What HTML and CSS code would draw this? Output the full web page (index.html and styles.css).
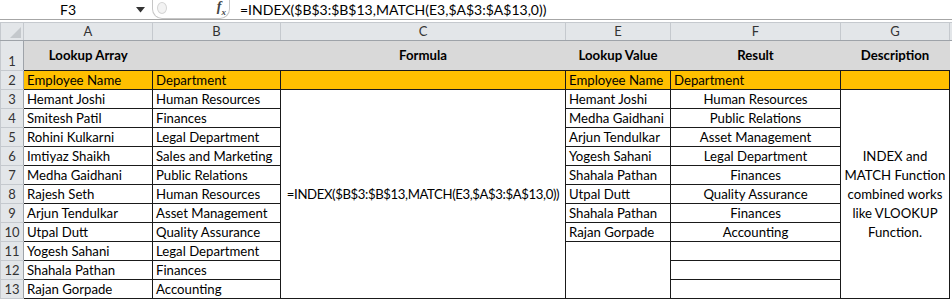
FILE: index.html
```html
<!DOCTYPE html>
<html lang="en">

<head>
    <meta charset="UTF-8">
    <meta name="viewport" content="width=device-width, initial-scale=1.0">
    <title>INDEX MATCH</title>
    <link rel="stylesheet" href="styles.css">
</head>

<body>
    <!-- 公式栏 -->
    <div class="formula-bar">
        <div class="name-box">F3</div>
        <div class="name-arrow">
            <svg width="9" height="6" viewBox="0 0 9 6"><path d="M0 0 H9 L4.5 5.5 Z" fill="#333" /></svg>
        </div>
        <div class="fx-group">
            <span class="grip"></span>
            <span class="fx">f<sub>x</sub></span>
        </div>
        <div class="formula-input">=INDEX($B$3:$B$13,MATCH(E3,$A$3:$A$13,0))</div>
    </div>

    <table class="sheet">
        <colgroup>
            <col class="c-rn">
            <col class="c-a">
            <col class="c-b">
            <col class="c-c">
            <col class="c-e">
            <col class="c-f">
            <col class="c-g">
            <col class="c-rest">
        </colgroup>
        <tr class="col-head">
            <th class="corner"><span class="tri"></span></th>
            <th>A</th>
            <th>B</th>
            <th>C</th>
            <th>E</th>
            <th>F</th>
            <th>G</th>
            <th class="rest"></th>
        </tr>
        <tr class="r1">
            <td class="rn">1</td>
            <td class="title">Lookup Array</td>
            <td class="title"></td>
            <td class="title">Formula</td>
            <td class="title">Lookup Value</td>
            <td class="title">Result</td>
            <td class="title">Description</td>
            <td class="rest"></td>
        </tr>
        <tr class="r2">
            <td class="rn">2</td>
            <td class="b hd">Employee Name</td>
            <td class="b hd">Department</td>
            <td class="b hd"></td>
            <td class="b hd">Employee Name</td>
            <td class="b hd">Department</td>
            <td class="b hd"></td>
            <td class="rest"></td>
        </tr>
        <tr>
            <td class="rn">3</td>
            <td class="b">Hemant Joshi</td>
            <td class="b">Human Resources</td>
            <td class="b formula" rowspan="11">=INDEX($B$3:$B$13,MATCH(E3,$A$3:$A$13,0))</td>
            <td class="b">Hemant Joshi</td>
            <td class="b mid">Human Resources</td>
            <td class="b desc" rowspan="11">INDEX and<br>MATCH Function<br>combined works<br>like VLOOKUP<br>Function.</td>
            <td class="rest"></td>
        </tr>
        <tr>
            <td class="rn">4</td>
            <td class="b">Smitesh Patil</td>
            <td class="b">Finances</td>
            <td class="b">Medha Gaidhani</td>
            <td class="b mid">Public Relations</td>
            <td class="rest"></td>
        </tr>
        <tr>
            <td class="rn">5</td>
            <td class="b">Rohini Kulkarni</td>
            <td class="b">Legal Department</td>
            <td class="b">Arjun Tendulkar</td>
            <td class="b mid">Asset Management</td>
            <td class="rest"></td>
        </tr>
        <tr>
            <td class="rn">6</td>
            <td class="b">Imtiyaz Shaikh</td>
            <td class="b">Sales and Marketing</td>
            <td class="b">Yogesh Sahani</td>
            <td class="b mid">Legal Department</td>
            <td class="rest"></td>
        </tr>
        <tr>
            <td class="rn">7</td>
            <td class="b">Medha Gaidhani</td>
            <td class="b">Public Relations</td>
            <td class="b">Shahala Pathan</td>
            <td class="b mid">Finances</td>
            <td class="rest"></td>
        </tr>
        <tr>
            <td class="rn">8</td>
            <td class="b">Rajesh Seth</td>
            <td class="b">Human Resources</td>
            <td class="b">Utpal Dutt</td>
            <td class="b mid">Quality Assurance</td>
            <td class="rest"></td>
        </tr>
        <tr>
            <td class="rn">9</td>
            <td class="b">Arjun Tendulkar</td>
            <td class="b">Asset Management</td>
            <td class="b">Shahala Pathan</td>
            <td class="b mid">Finances</td>
            <td class="rest"></td>
        </tr>
        <tr>
            <td class="rn">10</td>
            <td class="b">Utpal Dutt</td>
            <td class="b">Quality Assurance</td>
            <td class="b">Rajan Gorpade</td>
            <td class="b mid">Accounting</td>
            <td class="rest"></td>
        </tr>
        <tr>
            <td class="rn">11</td>
            <td class="b">Yogesh Sahani</td>
            <td class="b">Legal Department</td>
            <td class="b" rowspan="3"></td>
            <td class="b mid"></td>
            <td class="rest"></td>
        </tr>
        <tr>
            <td class="rn">12</td>
            <td class="b">Shahala Pathan</td>
            <td class="b">Finances</td>
            <td class="b mid"></td>
            <td class="rest"></td>
        </tr>
        <tr>
            <td class="rn">13</td>
            <td class="b">Rajan Gorpade</td>
            <td class="b">Accounting</td>
            <td class="b mid"></td>
            <td class="rest"></td>
        </tr>
    </table>
</body>

</html>
```

FILE: styles.css
```css
* {
    margin: 0;
    padding: 0;
    box-sizing: border-box;
}

body {
    background: #fff;
    font-family: Lato, "Open Sans", sans-serif;
    font-size: 13.2px;
    color: #000;
    overflow: hidden;
}

/* 公式栏 */
.formula-bar {
    display: flex;
    align-items: center;
    height: 20px;
    border-bottom: 1px solid #a6a6a6;
    margin-bottom: 2px;
}

.name-box {
    width: 136px;
    text-align: center;
    font-size: 14px;
}

.name-arrow {
    width: 16px;
    display: flex;
    align-items: center;
}

.fx-group {
    width: 78px;
    height: 20px;
    margin-top: -2px;
    border: 1px solid #c6c6c6;
    border-top: none;
    border-radius: 0 0 10px 10px;
    display: flex;
    align-items: center;
    justify-content: space-between;
    padding: 0 3px 0 4px;
}

.grip {
    width: 10px;
    height: 12px;
    border-radius: 50%;
    border: 1px solid #d4d4d4;
    background: #f3f3f3;
}

.fx {
    font-family: "Liberation Serif", serif;
    font-style: italic;
    font-weight: bold;
    font-size: 14px;
    color: #444;
}

.fx sub {
    font-size: 9px;
}

.formula-input {
    padding-left: 10px;
    font-size: 14px;
}

/* 表格 */
.sheet {
    border-collapse: collapse;
    table-layout: fixed;
    width: 952px;
}

.c-rn { width: 23px; }
.c-a { width: 129px; }
.c-b { width: 128px; }
.c-c { width: 285px; }
.c-e { width: 105px; }
.c-f { width: 170px; }
.c-g { width: 109px; }
.c-rest { width: 3px; }

td,
th {
    height: 19px;
    padding: 0 3px;
    white-space: nowrap;
    overflow: hidden;
    line-height: 17px;
}

.col-head th {
    height: 18px;
    background: #e3e6e9;
    border: 1px solid #c5c9ce;
    border-bottom-color: #9ea3a9;
    font-weight: normal;
    font-size: 13px;
    color: #333;
}

.corner {
    position: relative;
}

.tri {
    position: absolute;
    right: 2px;
    bottom: 2px;
    width: 0;
    height: 0;
    border-left: 11px solid transparent;
    border-bottom: 11px solid #c4c8cc;
}

.rn {
    background: #e3e6e9;
    border: 1px solid #c5c9ce;
    border-right-color: #9ea3a9;
    text-align: center;
    font-size: 13px;
    color: #333;
    padding: 0;
}

.r1 td {
    height: 30px;
}

.r1 .rn {
    vertical-align: bottom;
}

.title {
    background: #d9d9d9;
    font-weight: bold;
    text-align: center;
}

.b {
    border: 1px solid #1a1a1a;
}

.hd {
    background: #ffc000;
}

.mid {
    text-align: center;
}

.formula {
    text-align: center;
    vertical-align: middle;
    letter-spacing: -0.4px;
}

.desc {
    text-align: center;
    vertical-align: middle;
    line-height: 19px;
}

.rest {
    background: #fff;
}

.col-head .rest {
    background: #e3e6e9;
}
```
